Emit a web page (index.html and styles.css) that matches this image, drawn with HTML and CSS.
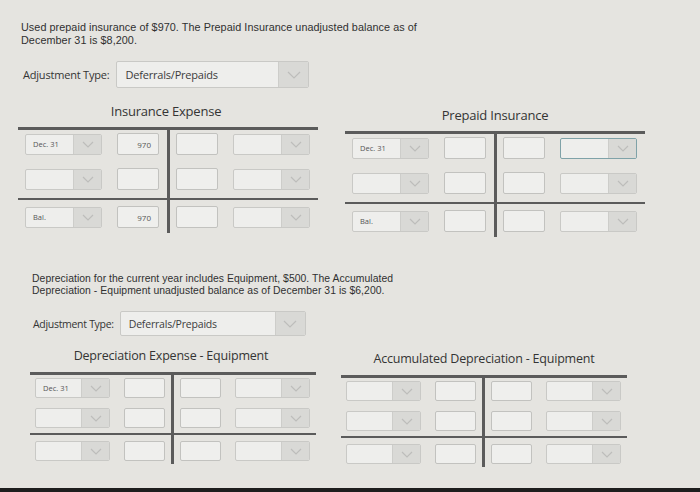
FILE: index.html
```html
<!DOCTYPE html>
<html>
<head>
<meta charset="utf-8">
<link rel="stylesheet" href="styles.css">
</head>
<body>
<div class="page">
  <section class="q q1">
    <div class="prompt"><div class="pline">Used prepaid insurance of $970. The Prepaid Insurance unadjusted balance as of</div><div class="pline">December 31 is $8,200.</div></div>
    <div class="adj">
      <span class="adj-label">Adjustment Type:</span>
      <div class="select big"><span class="val">Deferrals/Prepaids</span><span class="arrow"><svg width="14" height="8" viewBox="0 0 14 8"><polyline points="1,1 7,7 13,1" fill="none" stroke="#bdbdbb" stroke-width="1.2"/></svg></span></div>
    </div>
    <div class="accounts">
      <div class="taccount acc-l">
        <div class="ttitle">Insurance Expense</div>
        <div class="tgrid">
          <div class="cell l">
            <div class="row"><div class="select sm"><span class="val">Dec. 31</span><span class="arrow"><svg width="12" height="7" viewBox="0 0 12 7"><polyline points="1,1 6,6 11,1" fill="none" stroke="#bdbdbb" stroke-width="1.2"/></svg></span></div><div class="inp">970</div></div>
            <div class="row"><div class="select sm"><span class="val"></span><span class="arrow"><svg width="12" height="7" viewBox="0 0 12 7"><polyline points="1,1 6,6 11,1" fill="none" stroke="#bdbdbb" stroke-width="1.2"/></svg></span></div><div class="inp"></div></div>
          </div>
          <div class="cell r">
            <div class="row"><div class="inp"></div><div class="select sm"><span class="val"></span><span class="arrow"><svg width="12" height="7" viewBox="0 0 12 7"><polyline points="1,1 6,6 11,1" fill="none" stroke="#bdbdbb" stroke-width="1.2"/></svg></span></div></div>
            <div class="row"><div class="inp"></div><div class="select sm"><span class="val"></span><span class="arrow"><svg width="12" height="7" viewBox="0 0 12 7"><polyline points="1,1 6,6 11,1" fill="none" stroke="#bdbdbb" stroke-width="1.2"/></svg></span></div></div>
          </div>
          <div class="cell l bal">
            <div class="row"><div class="select sm"><span class="val">Bal.</span><span class="arrow"><svg width="12" height="7" viewBox="0 0 12 7"><polyline points="1,1 6,6 11,1" fill="none" stroke="#bdbdbb" stroke-width="1.2"/></svg></span></div><div class="inp">970</div></div>
          </div>
          <div class="cell r bal">
            <div class="row"><div class="inp"></div><div class="select sm"><span class="val"></span><span class="arrow"><svg width="12" height="7" viewBox="0 0 12 7"><polyline points="1,1 6,6 11,1" fill="none" stroke="#bdbdbb" stroke-width="1.2"/></svg></span></div></div>
          </div>
        </div>
      </div>
      <div class="taccount acc-r">
        <div class="ttitle">Prepaid Insurance</div>
        <div class="tgrid">
          <div class="cell l">
            <div class="row"><div class="select sm"><span class="val">Dec. 31</span><span class="arrow"><svg width="12" height="7" viewBox="0 0 12 7"><polyline points="1,1 6,6 11,1" fill="none" stroke="#bdbdbb" stroke-width="1.2"/></svg></span></div><div class="inp"></div></div>
            <div class="row"><div class="select sm"><span class="val"></span><span class="arrow"><svg width="12" height="7" viewBox="0 0 12 7"><polyline points="1,1 6,6 11,1" fill="none" stroke="#bdbdbb" stroke-width="1.2"/></svg></span></div><div class="inp"></div></div>
          </div>
          <div class="cell r">
            <div class="row"><div class="inp"></div><div class="select sm focus"><span class="val"></span><span class="arrow"><svg width="12" height="7" viewBox="0 0 12 7"><polyline points="1,1 6,6 11,1" fill="none" stroke="#bdbdbb" stroke-width="1.2"/></svg></span></div></div>
            <div class="row"><div class="inp"></div><div class="select sm"><span class="val"></span><span class="arrow"><svg width="12" height="7" viewBox="0 0 12 7"><polyline points="1,1 6,6 11,1" fill="none" stroke="#bdbdbb" stroke-width="1.2"/></svg></span></div></div>
          </div>
          <div class="cell l bal">
            <div class="row"><div class="select sm"><span class="val">Bal.</span><span class="arrow"><svg width="12" height="7" viewBox="0 0 12 7"><polyline points="1,1 6,6 11,1" fill="none" stroke="#bdbdbb" stroke-width="1.2"/></svg></span></div><div class="inp"></div></div>
          </div>
          <div class="cell r bal">
            <div class="row"><div class="inp"></div><div class="select sm"><span class="val"></span><span class="arrow"><svg width="12" height="7" viewBox="0 0 12 7"><polyline points="1,1 6,6 11,1" fill="none" stroke="#bdbdbb" stroke-width="1.2"/></svg></span></div></div>
          </div>
        </div>
      </div>
    </div>
  </section>

  <section class="q q2">
    <div class="prompt"><div class="pline">Depreciation for the current year includes Equipment, $500. The Accumulated</div><div class="pline">Depreciation - Equipment unadjusted balance as of December 31 is $6,200.</div></div>
    <div class="adj">
      <span class="adj-label">Adjustment Type:</span>
      <div class="select big"><span class="val">Deferrals/Prepaids</span><span class="arrow"><svg width="14" height="8" viewBox="0 0 14 8"><polyline points="1,1 7,7 13,1" fill="none" stroke="#bdbdbb" stroke-width="1.2"/></svg></span></div>
    </div>
    <div class="accounts">
      <div class="taccount acc-l">
        <div class="ttitle">Depreciation Expense - Equipment</div>
        <div class="tgrid">
          <div class="cell l">
            <div class="row"><div class="select sm"><span class="val">Dec. 31</span><span class="arrow"><svg width="12" height="7" viewBox="0 0 12 7"><polyline points="1,1 6,6 11,1" fill="none" stroke="#bdbdbb" stroke-width="1.2"/></svg></span></div><div class="inp"></div></div>
            <div class="row"><div class="select sm"><span class="val"></span><span class="arrow"><svg width="12" height="7" viewBox="0 0 12 7"><polyline points="1,1 6,6 11,1" fill="none" stroke="#bdbdbb" stroke-width="1.2"/></svg></span></div><div class="inp"></div></div>
          </div>
          <div class="cell r">
            <div class="row"><div class="inp"></div><div class="select sm"><span class="val"></span><span class="arrow"><svg width="12" height="7" viewBox="0 0 12 7"><polyline points="1,1 6,6 11,1" fill="none" stroke="#bdbdbb" stroke-width="1.2"/></svg></span></div></div>
            <div class="row"><div class="inp"></div><div class="select sm"><span class="val"></span><span class="arrow"><svg width="12" height="7" viewBox="0 0 12 7"><polyline points="1,1 6,6 11,1" fill="none" stroke="#bdbdbb" stroke-width="1.2"/></svg></span></div></div>
          </div>
          <div class="cell l bal">
            <div class="row"><div class="select sm"><span class="val"></span><span class="arrow"><svg width="12" height="7" viewBox="0 0 12 7"><polyline points="1,1 6,6 11,1" fill="none" stroke="#bdbdbb" stroke-width="1.2"/></svg></span></div><div class="inp"></div></div>
          </div>
          <div class="cell r bal">
            <div class="row"><div class="inp"></div><div class="select sm"><span class="val"></span><span class="arrow"><svg width="12" height="7" viewBox="0 0 12 7"><polyline points="1,1 6,6 11,1" fill="none" stroke="#bdbdbb" stroke-width="1.2"/></svg></span></div></div>
          </div>
        </div>
      </div>
      <div class="taccount acc-r">
        <div class="ttitle">Accumulated Depreciation - Equipment</div>
        <div class="tgrid">
          <div class="cell l">
            <div class="row"><div class="select sm"><span class="val"></span><span class="arrow"><svg width="12" height="7" viewBox="0 0 12 7"><polyline points="1,1 6,6 11,1" fill="none" stroke="#bdbdbb" stroke-width="1.2"/></svg></span></div><div class="inp"></div></div>
            <div class="row"><div class="select sm"><span class="val"></span><span class="arrow"><svg width="12" height="7" viewBox="0 0 12 7"><polyline points="1,1 6,6 11,1" fill="none" stroke="#bdbdbb" stroke-width="1.2"/></svg></span></div><div class="inp"></div></div>
          </div>
          <div class="cell r">
            <div class="row"><div class="inp"></div><div class="select sm"><span class="val"></span><span class="arrow"><svg width="12" height="7" viewBox="0 0 12 7"><polyline points="1,1 6,6 11,1" fill="none" stroke="#bdbdbb" stroke-width="1.2"/></svg></span></div></div>
            <div class="row"><div class="inp"></div><div class="select sm"><span class="val"></span><span class="arrow"><svg width="12" height="7" viewBox="0 0 12 7"><polyline points="1,1 6,6 11,1" fill="none" stroke="#bdbdbb" stroke-width="1.2"/></svg></span></div></div>
          </div>
          <div class="cell l bal">
            <div class="row"><div class="select sm"><span class="val"></span><span class="arrow"><svg width="12" height="7" viewBox="0 0 12 7"><polyline points="1,1 6,6 11,1" fill="none" stroke="#bdbdbb" stroke-width="1.2"/></svg></span></div><div class="inp"></div></div>
          </div>
          <div class="cell r bal">
            <div class="row"><div class="inp"></div><div class="select sm"><span class="val"></span><span class="arrow"><svg width="12" height="7" viewBox="0 0 12 7"><polyline points="1,1 6,6 11,1" fill="none" stroke="#bdbdbb" stroke-width="1.2"/></svg></span></div></div>
          </div>
        </div>
      </div>
    </div>
  </section>
  <div class="bezel"></div>
</div>
</body>
</html>
```

FILE: styles.css
```css
* { box-sizing: border-box; }
html, body { margin: 0; padding: 0; }
body {
  width: 700px;
  height: 492px;
  overflow: hidden;
  background: #e5e4e0;
  font-family: "Open Sans", "Noto Sans", sans-serif;
  color: #343434;
}
.page {
  width: 700px;
  height: 492px;
  display: flex;
  flex-direction: column;
}
.q { display: flex; flex-direction: column; }
.q1 { padding: 21px 0 0 21px; }
.q2 { padding: 36px 0 0 32px; }
.prompt {
  margin: 0;
  font-family: "Liberation Sans", Arial, sans-serif;
  font-size: 10.8px;
  letter-spacing: 0.06px;
  color: #303030;
}
.pline {
  height: 12.5px;
  line-height: 12.5px;
  white-space: nowrap;
}
.q2 .prompt {
  font-size: 10.4px;
  letter-spacing: 0.05px;
}
.q2 .pline { height: 12px; line-height: 12px; }
.adj {
  display: flex;
  align-items: center;
  gap: 7px;
  margin-top: 15px;
}
.q2 .adj { margin-top: 14px; gap: 6px; }
.adj-label { font-size: 11px; letter-spacing: -0.2px; padding-left: 2px; }
.q2 .adj-label { padding-left: 1px; font-size: 10.5px; letter-spacing: -0.3px; }
.select {
  display: flex;
  border: 1px solid #c9c9c6;
  border-radius: 2px;
  background: #eeeeec;
  overflow: hidden;
}
.select .val {
  flex: 1;
  display: flex;
  align-items: center;
  color: #3c3c3c;
}
.select .arrow {
  display: flex;
  align-items: center;
  justify-content: center;
  background: #d9d9d6;
  border-left: 1px solid #cdcdca;
}
.select.big { width: 193px; height: 27px; }
.q2 .select.big { width: 186px; height: 25px; }
.select.big .val { font-size: 11px; padding-left: 8px; letter-spacing: -0.2px; }
.q2 .select.big .val { font-size: 10.5px; }
.select.big .arrow { width: 30px; }
.select.sm { width: 77px; height: 21px; }
.q2 .select.sm { width: 75px; height: 20px; }
.select.sm .val { font-size: 7.5px; padding-left: 7px; color: #555; }
.select.sm .arrow { width: 28px; }
.select.focus { border-color: #7fa2a8; }
.inp {
  width: 42px;
  height: 22px;
  border: 1px solid #c2c2bf;
  border-radius: 2px;
  background: #efefed;
  font-size: 8px;
  color: #555;
  display: flex;
  align-items: center;
  justify-content: flex-end;
  padding-right: 7px;
}
.q2 .inp { width: 41px; height: 20px; }
.accounts {
  display: flex;
  gap: 27px;
  margin-top: 14px;
  margin-left: -3px;
}
.q2 .accounts { margin-top: 11px; margin-left: -2px; gap: 25px; }
.taccount { width: 300px; }
.q2 .taccount { width: 286px; }
.ttitle {
  text-align: center;
  font-size: 13px;
  line-height: 18px;
  height: 25px;
  letter-spacing: -0.2px;
}
.acc-l .ttitle { padding-right: 4px; }
.acc-r .ttitle { padding-top: 4px; height: 29px; }
.q2 .ttitle { height: 25px; font-size: 12.5px; }
.q2 .acc-r .ttitle { padding-top: 3px; height: 28px; }
.tgrid {
  display: grid;
  grid-template-columns: 152px 1fr;
  border-top: 3px solid #5b5b5b;
}
.q2 .tgrid { grid-template-columns: 144px 1fr; }
.cell {
  display: flex;
  flex-direction: column;
  gap: 13px;
  padding: 3px 0 8px 7px;
}
.q2 .cell { gap: 10px; padding: 3px 0 5px 5px; }
.cell.l { border-right: 3px solid #5b5b5b; }
.cell.r { padding-left: 6px; }
.q2 .cell.r { padding-left: 6px; }
.cell.bal { border-top: 2px solid #5b5b5b; padding-top: 6px; padding-bottom: 5px; }
.q2 .cell.bal { padding-top: 6px; padding-bottom: 3px; }
.row {
  display: flex;
  align-items: center;
  gap: 15px;
}
.q2 .row { gap: 14px; }
.bezel {
  margin-top: auto;
  height: 4px;
  background: #1e1e1e;
}
```
